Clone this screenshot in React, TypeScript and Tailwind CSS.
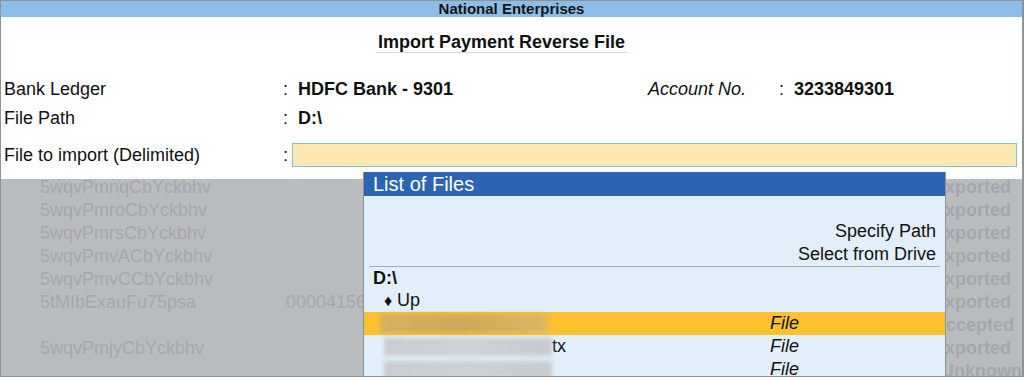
import React from "react";

const bgRows = [
  { name: "5wqvPmnqCbYckbhv", num: "", status: "Exported" },
  { name: "5wqvPmroCbYckbhv", num: "", status: "Exported" },
  { name: "5wqvPmrsCbYckbhv", num: "", status: "Exported" },
  { name: "5wqvPmvACbYckbhv", num: "", status: "Exported" },
  { name: "5wqvPmvCCbYckbhv", num: "", status: "Exported" },
  { name: "5tMIbExauFu75psa", num: "0000415678", status: "Exported" },
  { name: "", num: "", status: "Accepted" },
  { name: "5wqvPmjyCbYckbhv", num: "", status: "Exported" },
  { name: "", num: "", status: "Unknown" },
];

export default function App() {
  return (
    <div className="w-[1024px] h-[377px] relative overflow-hidden border border-r-2 border-[#8e9398] bg-white flex flex-col font-['Liberation_Sans',Arial,sans-serif] text-[#111]">
      {/* Company bar */}
      <div className="h-[16px] bg-[#8bbde6] text-center text-[15px] font-bold leading-[16px] text-[#141414]">
        National Enterprises
      </div>

      {/* Form area */}
      <div className="h-[162px] bg-white">
        <div className="flex justify-center pr-[20px] pt-[15px]">
          <div className="px-[2px] text-[18px] font-bold leading-[20px] border-b border-[#dcdcdc]">
            Import Payment Reverse File
          </div>
        </div>

        <div className="mt-[25px] text-[18px]">
          <div className="flex h-[23px] items-center leading-[23px]">
            <div className="w-[282px] pl-[3px]">Bank Ledger</div>
            <div className="w-[15px]">:</div>
            <div className="w-[350px] font-bold">HDFC Bank - 9301</div>
            <div className="w-[131px] italic">Account No.</div>
            <div className="w-[15px]">:</div>
            <div className="font-bold">3233849301</div>
          </div>
          <div className="mt-[6px] flex h-[23px] items-center leading-[23px]">
            <div className="w-[282px] pl-[3px]">File Path</div>
            <div className="w-[15px]">:</div>
            <div className="font-bold">D:\</div>
          </div>
          <div className="mt-[13px] flex h-[24px] items-center leading-[24px]">
            <div className="w-[282px] pl-[3px]">File to import (Delimited)</div>
            <div className="w-[9px]">:</div>
            <div className="w-[725px] h-[24px] border border-[#86c0c9] bg-[#fde7b3]" />
          </div>
        </div>
      </div>

      {/* Dimmed report behind */}
      <div className="flex-1 overflow-hidden bg-[#b9bcbf] text-[18px] leading-[23px] text-[#a4a7aa]">
        <div className="-mt-[3px]">
          {bgRows.map((r, i) => (
            <div key={i} className="flex h-[23px] whitespace-nowrap">
              <div className="w-[285px] pl-[39px]">{r.name}</div>
              <div className="w-[647px]">{r.num}</div>
              <div className={`font-bold ${r.status === "Unknown" ? "pl-[16px]" : ""}`}>{r.status}</div>
            </div>
          ))}
        </div>
      </div>

      {/* List of Files popup */}
      <div className="absolute left-[362px] top-[171px] bottom-0 w-[583px] border-l border-r border-[#8d9296] bg-[#e2effb] text-[18px]">
        <div className="h-[24px] bg-[#2b64b0] pl-[9px] text-[20px] leading-[24px] text-white">
          List of Files
        </div>
        <div className="h-[24px]" />
        <div className="h-[23px] pr-[9px] text-right leading-[23px]">Specify Path</div>
        <div className="h-[23px] pr-[9px] text-right leading-[23px]">Select from Drive</div>
        <div className="mx-[5px] border-t border-[#a3abb3]" />
        <div className="h-[22px] pl-[9px] font-bold leading-[22px]">D:\</div>
        <div className="flex h-[23px] items-center pl-[20px]">
          <span className="w-[13px] text-[16px] leading-none">♦</span>
          <span className="leading-[23px]">Up</span>
        </div>
        <div className="flex h-[23px] items-center bg-[#fdc12f] leading-[23px]">
          <div className="w-[406px] pl-[16px]">
            <div className="h-[19px] w-[168px] bg-gradient-to-r from-[#d3b163] via-[#cfa85a] to-[#dcb865] blur-[2px]" />
          </div>
          <div className="italic">File</div>
        </div>
        <div className="flex h-[23px] items-center leading-[23px]">
          <div className="flex w-[406px] items-center pl-[20px]">
            <div className="h-[18px] w-[168px] bg-gradient-to-r from-[#c9ccd0] via-[#cfd2d6] to-[#c6cace] blur-[2px]" />
            <span>tx</span>
          </div>
          <div className="italic">File</div>
        </div>
        <div className="flex h-[23px] items-center leading-[23px]">
          <div className="w-[406px] pl-[20px]">
            <div className="h-[18px] w-[168px] bg-gradient-to-r from-[#c8cbcf] via-[#cdd0d4] to-[#c7cbcf] blur-[2px]" />
          </div>
          <div className="italic">File</div>
        </div>
      </div>
    </div>
  );
}
